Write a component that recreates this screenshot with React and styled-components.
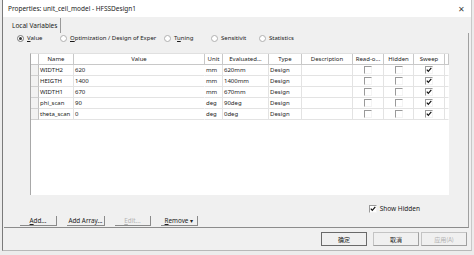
import React from 'react';
import styled, { createGlobalStyle } from 'styled-components';

const GlobalStyle = createGlobalStyle`
  html, body {
    margin: 0;
    padding: 0;
    background: #e9e9e9;
  }
  body {
    font-family: 'Noto Sans', 'Noto Sans CJK SC', sans-serif;
    font-size: 6.5px;
    color: #1a1a1a;
  }
`;

const Screen = styled.div`
  width: 474px;
  height: 255px;
  overflow: hidden;
  display: flex;
  background: #ececec;
`;

const Window = styled.div`
  width: 468px;
  height: 250px;
  margin-left: 2px;
  border-left: 1px solid #7a7a7a;
  border-right: 1px solid #c8c8c8;
  border-bottom: 1px solid #b8b8b8;
  background: #f0f0f0;
  display: flex;
  flex-direction: column;
`;

const TitleBar = styled.div`
  height: 17px;
  background: #ffffff;
  display: flex;
  align-items: center;
  justify-content: space-between;
  padding: 0 6px 0 5px;
  font-size: 6.5px;
  color: #222;
`;

const Close = styled.span`
  font-size: 8px;
  color: #444;
`;

const Body = styled.div`
  flex: 1;
  display: flex;
  flex-direction: column;
  padding: 1px 2px 0 1px;
`;

const TabStrip = styled.div`
  display: flex;
  height: 15px;
  padding-left: 6px;
`;

const Tab = styled.div`
  display: flex;
  align-items: center;
  padding: 0 3px 0 2px;
  border-right: 1px solid #9a9a9a;
  background: #f0f0f0;
  font-size: 6.5px;
`;

const Panel = styled.div`
  height: 195px;
  box-sizing: border-box;
  border-right: 1px solid #a0a0a0;
  border-bottom: 1px solid #8c8c8c;
  display: flex;
  flex-direction: column;
`;

const RadioRow = styled.div`
  display: flex;
  align-items: center;
  height: 10px;
  padding-left: 13px;
`;

const RadioItem = styled.label`
  display: flex;
  align-items: center;
  gap: 3px;
  width: ${p => p.$w}px;
  font-size: 6px;
  white-space: nowrap;
  u { text-decoration: underline; }
`;

const RadioDot = styled.span`
  flex: none;
  width: 5px;
  height: 5px;
  border-radius: 50%;
  border: 1px solid ${p => (p.$on ? '#777' : '#b0b0b0')};
  background: #fff;
  display: flex;
  align-items: center;
  justify-content: center;
  &::after {
    content: '';
    width: 3px;
    height: 3px;
    border-radius: 50%;
    background: ${p => (p.$on ? '#333' : 'transparent')};
  }
`;

const TableWrap = styled.div`
  margin: 10px 0 0 26px;
  width: 419px;
  height: 142px;
  flex: none;
  background: #fff;
  border-left: 1px solid #a8a8a8;
  border-top: 1px solid #e0e0e0;
  box-sizing: border-box;
`;

const cols = '8px 35px 131px 18px 46px 33px 51px 31px 30px 31px 4px';

const Row = styled.div`
  display: grid;
  grid-template-columns: ${cols};
  height: 11px;
`;

const HeadCell = styled.div`
  border-right: 1px solid #c8c8c8;
  border-bottom: 1px solid #c8c8c8;
  display: flex;
  align-items: center;
  justify-content: center;
  font-size: 6px;
  color: #222;
  white-space: nowrap;
  overflow: hidden;
`;

const RowHead = styled.div`
  background: #f2f2f2;
  border-right: 1px solid #c0c0c0;
  border-bottom: 1px solid #d0d0d0;
`;

const Cell = styled.div`
  border-right: 1px solid ${p => (p.$noline ? 'transparent' : '#e3e3e3')};
  border-bottom: 1px solid #e3e3e3;
  display: flex;
  align-items: center;
  justify-content: ${p => (p.$center ? 'center' : 'flex-start')};
  padding-left: ${p => (p.$center ? 0 : 1)}px;
  font-size: 6px;
  color: #222;
  white-space: nowrap;
  overflow: hidden;
`;

const Check = styled.span`
  width: 6px;
  height: 6px;
  border-top: 1px solid #9a9a9a;
  border-left: 1px solid #9a9a9a;
  border-right: 1px solid #f4f4f4;
  border-bottom: 1px solid #f4f4f4;
  background: #fff;
  position: relative;
  display: block;
`;

const Tick = styled.svg`
  position: absolute;
  left: 0;
  top: 0;
`;

const OptionsRow = styled.div`
  display: flex;
  justify-content: flex-end;
  align-items: center;
  height: 9px;
  margin-top: 9px;
  padding-right: 48px;
  gap: 3px;
  font-size: 6.5px;
`;

const ButtonRow = styled.div`
  display: flex;
  gap: 10px;
  padding-left: 16px;
  margin-top: 3px;
`;

const FlatButton = styled.button`
  all: unset;
  box-sizing: border-box;
  width: ${p => p.$w}px;
  height: 10px;
  border-right: 1px solid #8a8a8a;
  border-bottom: 1px solid #8a8a8a;
  display: flex;
  align-items: center;
  justify-content: center;
  gap: 2px;
  font-family: 'Noto Sans', sans-serif;
  font-size: 6.3px;
  color: ${p => (p.$disabled ? '#b4b4b4' : '#222')};
  u { text-decoration: underline; }
`;

const Footer = styled.div`
  display: flex;
  justify-content: flex-end;
  padding: 4px 2px 0 0;
`;

const DialogButton = styled.button`
  all: unset;
  box-sizing: border-box;
  width: 46px;
  height: 14px;
  margin-left: ${p => p.$gap || 0}px;
  border: 1px solid ${p => (p.$default ? '#6a6a6a' : '#c4c4c4')};
  border-right-color: ${p => (p.$default ? '#6a6a6a' : '#a0a0a0')};
  border-bottom-color: ${p => (p.$default ? '#6a6a6a' : '#a0a0a0')};
  background: #f0f0f0;
  display: flex;
  align-items: center;
  justify-content: center;
  font-family: 'Noto Sans CJK SC', sans-serif;
  font-size: 6px;
  color: ${p => (p.$disabled ? '#b0b0b0' : '#222')};
`;

const vars = [
  ['WIDTH2', '620', 'mm', '620mm'],
  ['HEIGTH', '1400', 'mm', '1400mm'],
  ['WIDTH1', '670', 'mm', '670mm'],
  ['phi_scan', '90', 'deg', '90deg'],
  ['theta_scan', '0', 'deg', '0deg'],
];

const headers = ['Name', 'Value', 'Unit', 'Evaluated...', 'Type', 'Description', 'Read-o...', 'Hidden', 'Sweep'];

const Box = ({ checked }) => (
  <Check>
    {checked && (
      <Tick width="6" height="6" viewBox="0 0 6 6">
        <path d="M0.8 2.6 L2.3 4.3 L5.3 0.8" stroke="#111" strokeWidth="1.2" fill="none" />
      </Tick>
    )}
  </Check>
);

export default function App() {
  return (
    <Screen>
      <GlobalStyle />
      <Window>
        <TitleBar>
          <span>Properties: unit_ceil_model - HFSSDesign1</span>
          <Close>✕</Close>
        </TitleBar>
        <Body>
          <TabStrip>
            <Tab>Local Variables</Tab>
          </TabStrip>
          <Panel>
            <RadioRow>
              <RadioItem $w={43}><RadioDot $on /><span><u>V</u>alue</span></RadioItem>
              <RadioItem $w={104}><RadioDot /><span><u>O</u>ptimization / Design of Exper</span></RadioItem>
              <RadioItem $w={47}><RadioDot /><span>T<u>u</u>ning</span></RadioItem>
              <RadioItem $w={48}><RadioDot /><span>Sensitivit</span></RadioItem>
              <RadioItem $w={50}><RadioDot /><span>Statistics</span></RadioItem>
            </RadioRow>
            <TableWrap>
              <Row>
                <HeadCell />
                {headers.map(h => <HeadCell key={h}>{h}</HeadCell>)}
                <HeadCell />
              </Row>
              {vars.map(([name, value, unit, ev]) => (
                <Row key={name}>
                  <RowHead />
                  <Cell>{name}</Cell>
                  <Cell $noline>{value}</Cell>
                  <Cell>{unit}</Cell>
                  <Cell>{ev}</Cell>
                  <Cell>Design</Cell>
                  <Cell />
                  <Cell $center><Box /></Cell>
                  <Cell $center><Box /></Cell>
                  <Cell $center><Box checked /></Cell>
                  <Cell $noline />
                </Row>
              ))}
            </TableWrap>
            <OptionsRow>
              <Box checked />
              <span>Show Hidden</span>
            </OptionsRow>
            <ButtonRow>
              <FlatButton $w={37}><span><u>A</u>dd...</span></FlatButton>
              <FlatButton $w={38}>Add Array...</FlatButton>
              <FlatButton $w={36} $disabled><span><u>E</u>dit...</span></FlatButton>
              <FlatButton $w={37}><span><u>R</u>emove</span><span>▾</span></FlatButton>
            </ButtonRow>
          </Panel>
          <Footer>
            <DialogButton $default>确定</DialogButton>
            <DialogButton $gap={6}>取消</DialogButton>
            <DialogButton $gap={2} $disabled>应用(A)</DialogButton>
          </Footer>
        </Body>
      </Window>
    </Screen>
  );
}
